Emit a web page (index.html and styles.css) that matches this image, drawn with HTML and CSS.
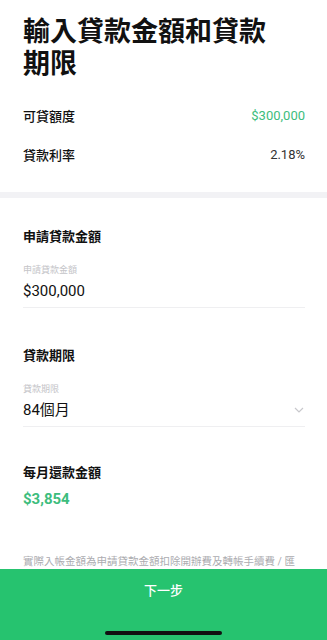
FILE: index.html
```html
<!DOCTYPE html>
<html>
    <head>
        <title>輸入貸款金額和貸款期限</title>
        <link rel="stylesheet" href="styles.css">
    </head>
    <body>
        <h1 class="title">輸入貸款金額和貸款<br>期限</h1>

        <div class="summary">
            <div class="row">
                <span>可貸額度</span>
                <span class="green">$300,000</span>
            </div>
            <div class="row">
                <span>貸款利率</span>
                <span>2.18%</span>
            </div>
        </div>

        <div class="band"></div>

        <div class="form">
            <div class="heading">申請貸款金額</div>
            <div class="field">
                <div class="label">申請貸款金額</div>
                <div class="value">$300,000</div>
            </div>

            <div class="heading">貸款期限</div>
            <div class="field">
                <div class="label">貸款期限</div>
                <div class="value select">
                    <span>84個月</span>
                    <svg class="chevron" width="10" height="6" viewBox="0 0 10 6">
                        <path d="M1 1 L5 5 L9 1" fill="none" stroke="#c8c8cc" stroke-width="1.2"/>
                    </svg>
                </div>
            </div>

            <div class="heading monthly">每月還款金額</div>
            <div class="amount">$3,854</div>

            <p class="note">實際入帳金額為申請貸款金額扣除開辦費及轉帳手續費 / 匯款手續費，實際撥款金額以核准結果為準。</p>
        </div>

        <div class="footer">
            <div class="next">下一步</div>
            <div class="home-bar"></div>
        </div>
    </body>
</html>
```

FILE: styles.css
```css
body {
    margin: 0;
    font-family: "Roboto", "Noto Sans CJK TC", sans-serif;
    color: #111;
    background: #fff;
}
.title {
    margin: 0;
    padding: 16px 23px 0;
    font-size: 27px;
    line-height: 32px;
    font-weight: 700;
}
.summary {
    padding: 16px 22px 18px 23px;
}
.row {
    display: flex;
    justify-content: space-between;
    align-items: center;
    height: 39px;
    font-size: 13px;
    font-weight: 500;
}
.row span:last-child {
    font-weight: 400;
    color: #333;
}
.row span.green {
    color: #3dbd7d;
}
.band {
    height: 6px;
    background: #f2f2f5;
}
.form {
    padding: 0 22px 0 23px;
}
.heading {
    margin-top: 29px;
    font-size: 13px;
    line-height: 20px;
    font-weight: 700;
}
.field + .heading {
    margin-top: 38px;
}
.field {
    margin-top: 17px;
    padding-bottom: 6px;
    border-bottom: 1px solid #efeff1;
}
.label {
    font-size: 9px;
    line-height: 12px;
    color: #c4c4c8;
}
.value {
    margin-top: 5px;
    font-size: 15px;
    line-height: 20px;
}
.select {
    display: flex;
    justify-content: space-between;
    align-items: center;
}
.chevron {
    margin-right: 1px;
}
.heading.monthly {
    margin-top: 36px;
}
.amount {
    margin-top: 6px;
    font-size: 15px;
    line-height: 20px;
    font-weight: 700;
    color: #3dbd7d;
}
.note {
    margin: 46px 0 0;
    font-size: 10.5px;
    line-height: 14px;
    color: #acacb0;
}
.footer {
    position: fixed;
    left: 0;
    right: 0;
    bottom: 0;
    height: 71px;
    background: #26c36f;
    display: flex;
    flex-direction: column;
    align-items: center;
}
.next {
    margin-top: 12px;
    font-size: 13px;
    line-height: 20px;
    font-weight: 500;
    color: #fff;
}
.home-bar {
    margin-top: 30px;
    width: 117px;
    height: 4px;
    border-radius: 2px;
    background: #111;
}
```
